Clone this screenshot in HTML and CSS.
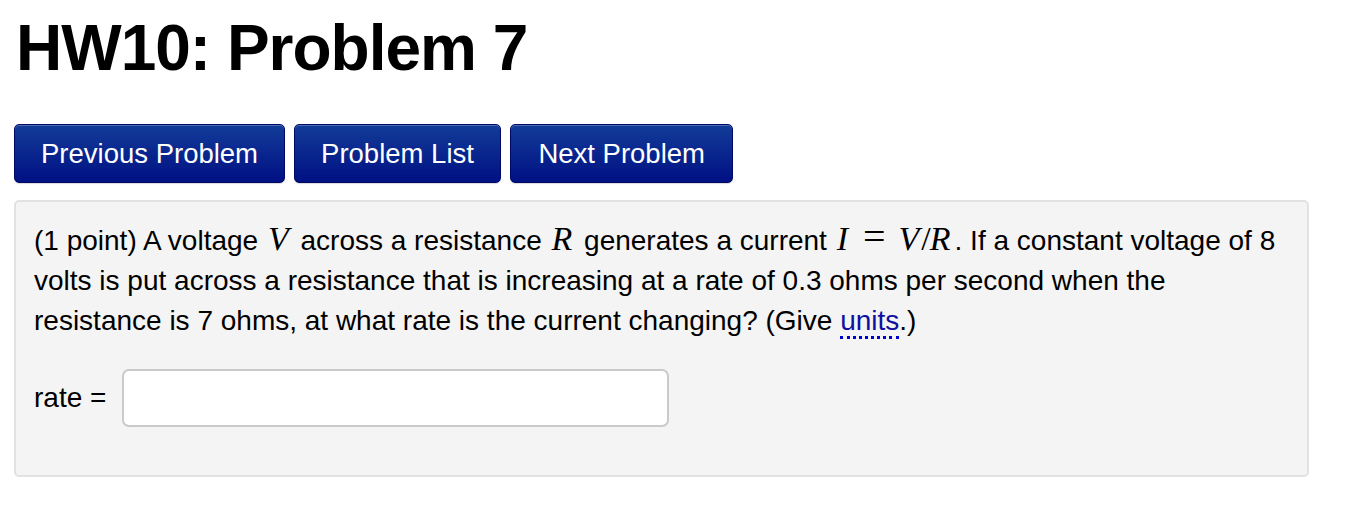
FILE: index.html
```html
<!doctype html>
<html lang="en">
    <head>
        <meta charset="UTF-8" />
        <meta name="viewport" content="width=device-width, initial-scale=1.0" />
        <title>HW10: Problem 7</title>
        <link rel="stylesheet" href="styles.css">
    </head>
    <body>
        <div class="page">
            <h1 class="title">HW10: Problem 7</h1>

            <!-- Navigation between problems of the set -->
            <nav class="nav-buttons">
                <a class="nav-btn" href="#">Previous Problem</a>
                <a class="nav-btn" href="#">Problem List</a>
                <a class="nav-btn" href="#">Next Problem</a>
            </nav>

            <!-- Problem statement and answer blank -->
            <div class="problem">
                <p class="statement">
                    (1 point) A voltage <span class="math"><i>V</i></span> across a resistance
                    <span class="math"><i>R</i></span> generates a current
                    <span class="math"><i>I</i><span class="op">=</span><i>V</i><span class="slash">/</span><i>R</i></span>. If a
                    constant voltage of 8 volts is put across a resistance that is increasing at a
                    rate of 0.3 ohms per second when the resistance is 7 ohms, at what rate is the
                    current changing? (Give <a class="help-link" href="#">units</a>.)
                </p>
                <div class="answer-row">
                    <label for="rate">rate =</label>
                    <input id="rate" class="answer" type="text" />
                </div>
            </div>
        </div>
    </body>
</html>
```

FILE: styles.css
```css
:root {
    --navy-300: #123c98;
    --navy-600: #001083;
    --navy-800: #000a66;
    --gray-100: #f4f4f4;
    --gray-300: #e2e2e2;
    --gray-400: #cacaca;
    --link: #0f0fa0;
    --link-dots: #0000d4;
}

body {
    margin: 0;
    font-family: "Liberation Sans", Arial, Helvetica, sans-serif;
    color: #000;
    background-color: white;
}
.page {
    padding: 16px 14px;
    width: 1295px;
}
.title {
    font-size: 64px;
    font-weight: bold;
    line-height: 1;
    letter-spacing: -1px;
    margin: 0 0 44px 2px;
}
.nav-buttons {
    display: flex;
    gap: 9px;
}
.nav-btn {
    display: inline-flex;
    align-items: center;
    box-sizing: border-box;
    height: 59px;
    padding: 0 26px;
    font-size: 27.5px;
    color: white;
    text-decoration: none;
    background: linear-gradient(to bottom, var(--navy-300), var(--navy-600));
    border: 1px solid var(--navy-800);
    border-radius: 5px;
    box-shadow:
        inset 0 1px 0 rgba(255, 255, 255, 0.25),
        0 1px 1px rgba(0, 0, 0, 0.15);
}
.nav-btn:nth-child(3) {
    padding: 0 27.5px;
}
.problem {
    margin-top: 17px;
    background-color: var(--gray-100);
    border: 2px solid var(--gray-300);
    border-radius: 5px;
    padding: 19px 18px 48px;
}
.statement {
    margin: 0;
    font-size: 28px;
    line-height: 40px;
}
/* line-height 0 keeps the bigger math glyphs from pushing the line box */
.math {
    font-family: "Liberation Serif", "Times New Roman", serif;
    font-size: 34px;
    line-height: 0;
}
.math i {
    font-style: italic;
    padding: 0 4px 0 2px;
}
.op {
    margin: 0 11px;
    font-size: 40px;
    font-style: normal;
}
.slash {
    margin: 0 -3px 0 -2px;
}
.help-link {
    color: var(--link);
    text-decoration: none;
    border-bottom: 3px dotted var(--link-dots);
}
.answer-row {
    display: flex;
    align-items: center;
    gap: 16px;
    margin-top: 28px;
    font-size: 28px;
}
.answer {
    box-sizing: border-box;
    width: 547px;
    height: 58px;
    background-color: white;
    border: 2px solid var(--gray-400);
    border-radius: 7px;
    font-size: 28px;
    padding: 0 10px;
}
```
